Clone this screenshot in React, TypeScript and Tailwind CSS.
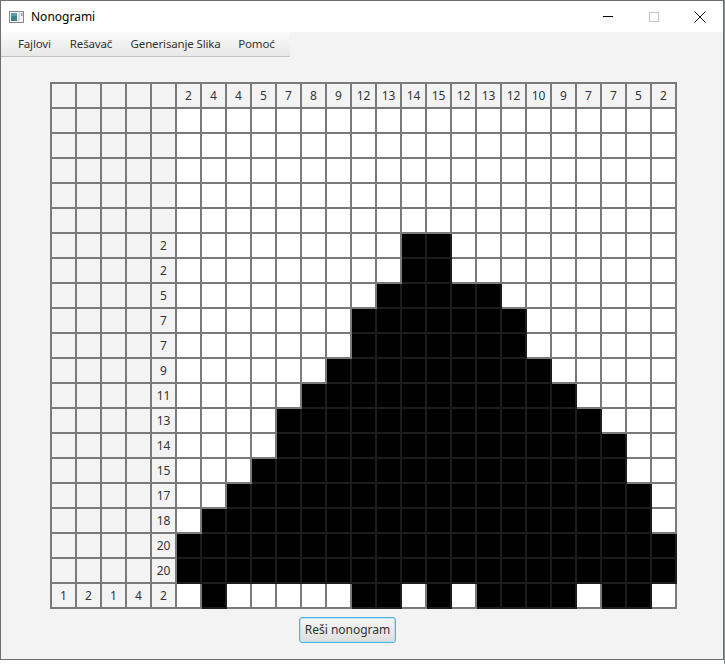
import React from 'react';

const colClues = [2, 4, 4, 5, 7, 8, 9, 12, 13, 14, 15, 12, 13, 12, 10, 9, 7, 7, 5, 2];

// filled ranges per puzzle row (inclusive column indexes)
const rowFill: [number, number][][] = [
  [], [], [], [], [],
  [[9, 10]], [[9, 10]], [[8, 12]], [[7, 13]], [[7, 13]],
  [[6, 14]], [[5, 15]], [[4, 16]], [[4, 17]], [[3, 17]],
  [[2, 18]], [[1, 18]], [[0, 19]], [[0, 19]],
  [[1, 1], [7, 8], [10, 10], [12, 15], [17, 18]],
];

const rowClues = (ranges: [number, number][]) => ranges.map(([a, b]) => b - a + 1);

const isFilled = (r: number, c: number) => rowFill[r].some(([a, b]) => c >= a && c <= b);

const ClueCell = ({ value }: { value?: number }) => (
  <div className="w-[25px] h-[25px] box-border border-r-2 border-b-2 border-[#7a7a7a] bg-[#f3f3f3] flex items-center justify-center text-[12px] text-[#333] leading-none">
    {value ?? ''}
  </div>
);

const PuzzleCell = ({ filled }: { filled: boolean }) => (
  <div
    className={
      filled
        ? 'w-[25px] h-[25px] box-border border-r-2 border-b-2 border-[#1c1c1c] bg-black'
        : 'w-[25px] h-[25px] box-border border-r-2 border-b-2 border-[#7a7a7a] bg-white'
    }
  />
);

const Board = () => (
  <div className="inline-flex flex-col border-l-2 border-t-2 border-[#7a7a7a]">
    {/* column clues */}
    <div className="flex">
      {[0, 1, 2, 3, 4].map((i) => (
        <ClueCell key={i} />
      ))}
      {colClues.map((v, i) => (
        <ClueCell key={i} value={v} />
      ))}
    </div>
    {rowFill.map((ranges, r) => {
      const clues = rowClues(ranges);
      const padded: (number | undefined)[] = [
        ...Array(5 - clues.length).fill(undefined),
        ...clues,
      ];
      return (
        <div key={r} className="flex">
          {padded.map((v, i) => (
            <ClueCell key={i} value={v} />
          ))}
          {colClues.map((_, c) => (
            <PuzzleCell key={c} filled={isFilled(r, c)} />
          ))}
        </div>
      );
    })}
  </div>
);

const AppIcon = () => (
  <svg width="15" height="12" viewBox="0 0 15 12">
    <rect x="0.5" y="0.5" width="14" height="11" fill="#f4f4f4" stroke="#8a8a8a" />
    <rect x="2" y="2" width="6" height="8" fill="#3f7f8f" />
    <rect x="2" y="2" width="6" height="3" fill="#5a9bb0" />
    <rect x="9" y="2" width="2" height="8" fill="#d8d8d8" />
    <rect x="12" y="2" width="1.5" height="3" fill="#9a9a9a" />
  </svg>
);

const menuItems = [
  { label: 'Fajlovi', w: 'w-[52px]' },
  { label: 'Rešavač', w: 'w-[61px]' },
  { label: 'Generisanje Slika', w: 'w-[108px]' },
  { label: 'Pomoć', w: 'w-[61px]' },
];

export default function App() {
  return (
    <div className="w-[725px] h-[664px] bg-white relative overflow-hidden" style={{ fontFamily: '"Noto Sans", "Open Sans", sans-serif' }}>
      <div className="w-[724px] h-[660px] border border-[#6e6e6e] bg-[#f3f3f3] flex flex-col">
        {/* Title bar */}
        <div className="h-[31px] bg-white flex items-center shrink-0">
          <div className="ml-[8px] mt-[1px] flex items-center">
            <AppIcon />
          </div>
          <span className="ml-[7px] text-[12px] text-black">Nonogrami</span>
          <div className="ml-auto flex items-center h-full">
            <div className="w-[46px] h-full flex items-center justify-center">
              <div className="w-[10px] h-[1px] bg-black" />
            </div>
            <div className="w-[46px] h-full flex items-center justify-center">
              <div className="w-[10px] h-[10px] border border-[#c6c6c6]" />
            </div>
            <div className="w-[46px] h-full flex items-center justify-center">
              <svg width="12" height="12" viewBox="0 0 12 12">
                <path d="M0.5 0.5 L11.5 11.5 M11.5 0.5 L0.5 11.5" stroke="#111" strokeWidth="1" />
              </svg>
            </div>
          </div>
        </div>

        {/* Menu bar */}
        <div className="h-[25px] flex shrink-0">
          <div className="w-[289px] h-full flex items-center pl-[8px] bg-gradient-to-b from-[#fbfbfb] to-[#e8e8e8] border-b border-[#c4c4c4]">
            {menuItems.map((m) => (
              <div key={m.label} className={`${m.w} pl-[9px] text-[11.5px] tracking-[-0.15px] text-[#333] whitespace-nowrap`}>
                {m.label}
              </div>
            ))}
          </div>
        </div>

        {/* Content */}
        <div className="flex flex-col items-start pt-[25px] pl-[49px]">
          <Board />
          <button className="mt-[8px] ml-[249px] w-[97px] h-[26px] rounded-[3px] border border-[#4fb3e3] bg-gradient-to-b from-[#f7f7f7] to-[#dedede] text-[12px] text-[#333] flex items-center justify-center shadow-[inset_0_0_0_1px_#b9dff3]">
            Reši nonogram
          </button>
        </div>
      </div>
      <div className="absolute right-0 top-0 w-[1px] h-full bg-[#8a8f9a]" />
    </div>
  );
}
